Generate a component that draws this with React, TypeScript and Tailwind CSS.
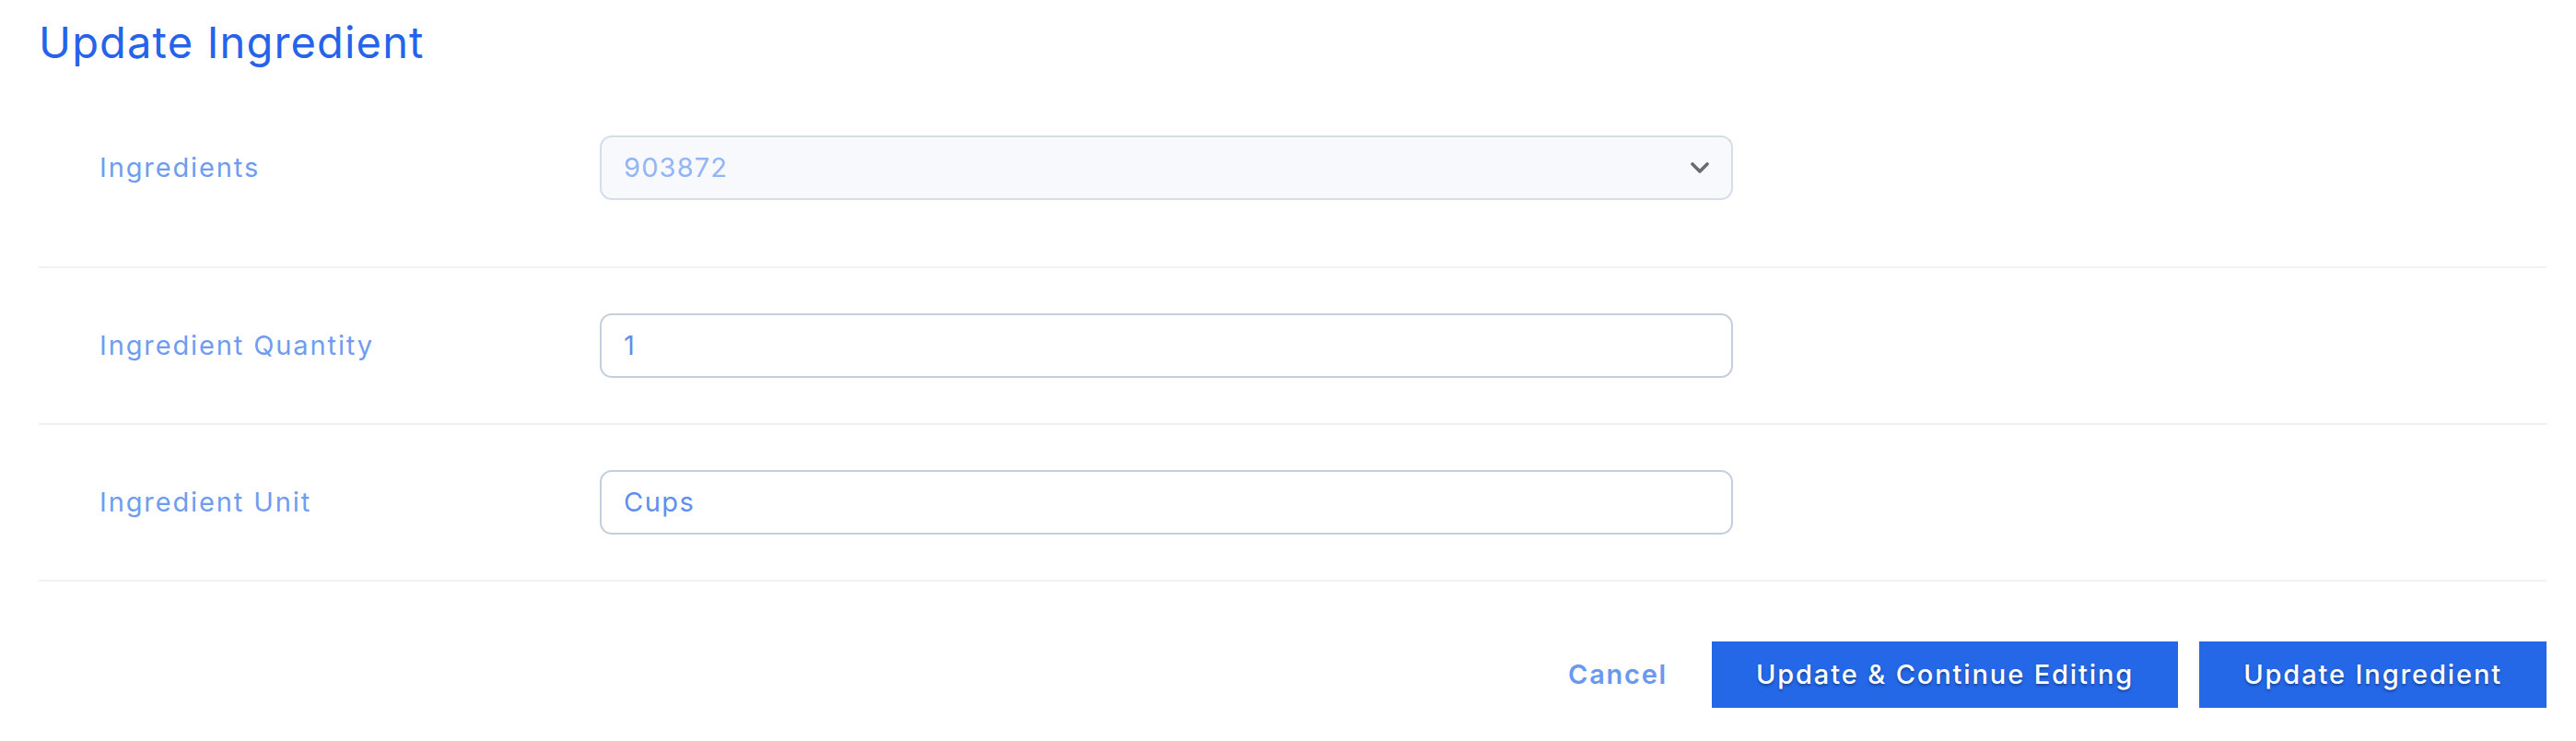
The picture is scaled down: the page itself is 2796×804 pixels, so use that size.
import React from "react";

const rows = [
  { label: "Ingredient Quantity", value: "1" },
  { label: "Ingredient Unit", value: "Cups" },
];

function Chevron() {
  return (
    <svg width="20" height="13" viewBox="0 0 20 13" fill="none">
      <polyline
        points="2,2 10,10 18,2"
        stroke="#6b6b6b"
        strokeWidth="3.6"
        strokeLinecap="round"
        strokeLinejoin="round"
      />
    </svg>
  );
}

export default function App() {
  return (
    <div className="min-h-screen bg-white pl-[42px] pr-[32px] font-['Inter',sans-serif]">
      <h1 className="pt-[18px] text-[47px] leading-[56px] font-normal tracking-[0.025em] text-[#2563eb]">
        Update Ingredient
      </h1>

      <div className="flex items-center border-b-2 border-[#f0f1f6] pt-[73px] pb-[72px]">
        <label className="w-[609px] pl-[66px] text-[29px] tracking-[0.065em] text-[#6f9cf1]">
          Ingredients
        </label>
        <div className="flex h-[70px] w-[1230px] items-center justify-between rounded-[13px] border-2 border-[#d4dde8] bg-[#f7f9fc] px-[24px]">
          <span className="text-[29px] tracking-[0.04em] text-[#93b4f5]">903872</span>
          <Chevron />
        </div>
      </div>

      {rows.map((row) => (
        <div
          key={row.label}
          className="flex items-center border-b-2 border-[#f0f1f6] py-[49px]"
        >
          <label className="w-[609px] pl-[66px] text-[29px] tracking-[0.065em] text-[#6f9cf1]">
            {row.label}
          </label>
          <div className="flex h-[70px] w-[1230px] items-center rounded-[13px] border-2 border-[#c3cfdc] bg-white px-[24px]">
            <span className="text-[29px] tracking-[0.05em] text-[#5e8ef0]">{row.value}</span>
          </div>
        </div>
      ))}

      <div className="flex items-center justify-end pt-[65px]">
        <button className="mr-[48px] text-[29px] font-semibold tracking-[0.06em] text-[#6a98ee]">
          Cancel
        </button>
        <button className="h-[72px] bg-[#2468e8] px-[48px] text-[29px] font-medium tracking-[0.065em] text-white [text-shadow:0_2px_3px_rgba(0,0,0,0.35)]">
          Update &amp; Continue Editing
        </button>
        <button className="ml-[23px] h-[72px] bg-[#2468e8] px-[48px] text-[29px] font-medium tracking-[0.065em] text-white [text-shadow:0_2px_3px_rgba(0,0,0,0.35)]">
          Update Ingredient
        </button>
      </div>
    </div>
  );
}
